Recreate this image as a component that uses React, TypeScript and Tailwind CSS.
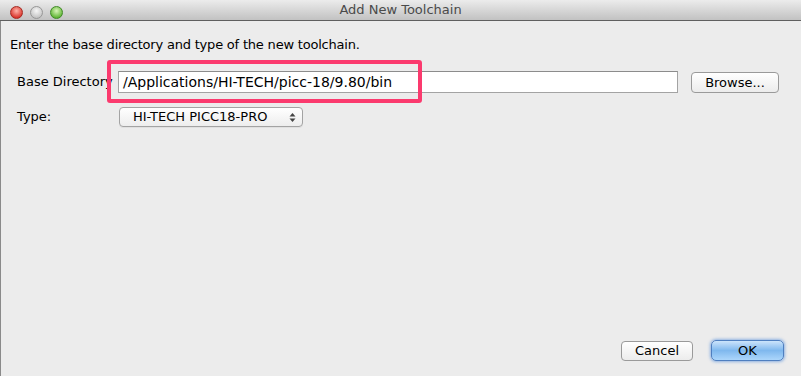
import React from 'react';

const Light = ({ from, to, border }: { from: string; to: string; border: string }) => (
  <span
    className="block w-[13px] h-[13px] rounded-full border"
    style={{ background: `radial-gradient(circle at 50% 35%, ${from} 0%, ${to} 75%)`, borderColor: border }}
  />
);

export default function App() {
  return (
    <div className="w-[801px] h-[376px] flex flex-col bg-[#ececec] overflow-hidden font-['DejaVu_Sans',sans-serif] text-[13px] text-black">
      {/* title bar */}
      <div className="relative h-[21px] shrink-0 flex items-center justify-center border-b border-[#5f5f5f] bg-gradient-to-b from-[#ececec] to-[#c2c2c2]">
        <div className="absolute left-[10px] top-[6px] flex gap-[7px]">
          <Light from="#ffb3a8" to="#d9342b" border="#a52a22" />
          <Light from="#f7f7f7" to="#c4c4c4" border="#979797" />
          <Light from="#d9f5b8" to="#5fb534" border="#3f8a26" />
        </div>
        <span className="text-[#4a4a4a]">Add New Toolchain</span>
      </div>

      {/* body */}
      <div className="relative flex-1 flex flex-col border-l border-[#8a8a8a]">
        <p className="mt-[16px] pl-[9px] leading-4 tracking-[-0.2px]">Enter the base directory and type of the new toolchain.</p>

        <div className="mt-[18px] flex items-center pl-[16px]">
          <span className="w-[101px]">Base Directory</span>
          <div className="w-[560px] h-[22px] flex items-center bg-white border border-[#a3a3a3] border-t-[#8c8c8c] pl-[4px] text-[14px]">
            /Applications/HI-TECH/picc-18/9.80/bin
          </div>
          <button className="ml-[13px] w-[88px] h-[21px] rounded-[4px] border border-[#9a9a9a] bg-gradient-to-b from-white to-[#ececec] text-[13px] leading-none">
            Browse...
          </button>
        </div>

        <div className="mt-[14px] flex items-center pl-[16px]">
          <span className="w-[102px]">Type:</span>
          <div className="w-[184px] h-[20px] flex items-center justify-between rounded-[4px] border border-[#a3a3a3] bg-gradient-to-b from-white to-[#ededed] pl-[13px] pr-[6px] shadow-[0_1px_0_rgba(0,0,0,0.05)]">
            <span>HI-TECH PICC18-PRO</span>
            <svg width="7" height="11" viewBox="0 0 7 11">
              <path d="M3.5 1 L6.5 4.5 H0.5 Z" fill="#444" />
              <path d="M3.5 10 L6.5 6.5 H0.5 Z" fill="#444" />
            </svg>
          </div>
        </div>

        <div className="mt-auto mb-[15px] mr-[17px] flex justify-end items-center gap-[18px]">
          <button className="w-[72px] h-[20px] rounded-[4px] border border-[#9a9a9a] bg-gradient-to-b from-white to-[#ececec] leading-none">
            Cancel
          </button>
          <button className="w-[73px] h-[21px] rounded-[5px] border border-[#4f7fc0] bg-gradient-to-b from-[#cce4fb] via-[#7fb8ee] to-[#acd6fb] shadow-[0_0_3px_1px_rgba(80,140,220,0.6)] leading-none">
            OK
          </button>
        </div>

        {/* highlight overlay */}
        <div className="absolute left-[106px] top-[39px] w-[315px] h-[43px] border-4 border-[#fb3a6e] rounded-[3px] pointer-events-none" />
      </div>
    </div>
  );
}
